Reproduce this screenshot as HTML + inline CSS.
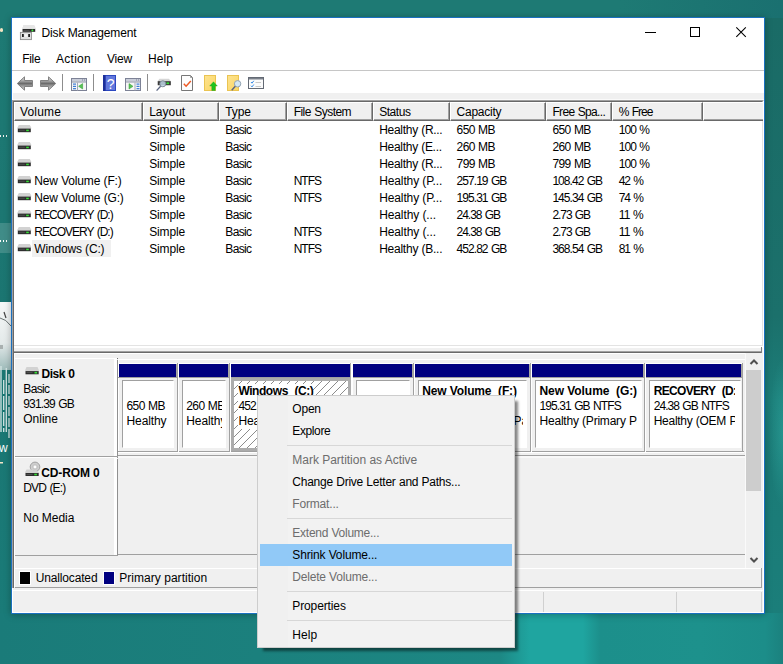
<!DOCTYPE html>
<html lang="en">
<head>
<meta charset="utf-8">
<title>Disk Management</title>
<style>
*{box-sizing:border-box;margin:0;padding:0}
html,body{width:783px;height:664px;overflow:hidden}
body{position:relative;font:12px "Liberation Sans",sans-serif;color:#000;background:#1d7974}
.a{position:absolute}
.t{position:absolute;white-space:pre;line-height:14px;height:14px;font-size:12px}
#win{left:11px;top:17px;width:754px;height:597px;border:1px solid #1a70c0;background:#fff;box-shadow:0 1px 7px 0 rgba(0,0,0,.28)}
#client{left:12px;top:93px;width:752px;height:520px;background:#f0f0f0;box-shadow:inset 0 -1px 0 #fff}
.hline{height:1px}
.vline{width:1px}
/* list header cells: classic raised */
.hc{position:absolute;top:102px;height:19px;background:#f0f0f0;border-left:1px solid #fff;border-top:1px solid #fff;border-right:1px solid #696969;border-bottom:1px solid #696969}
.hc:after{content:"";position:absolute;right:0;bottom:0;top:0;left:0;border-right:1px solid #a0a0a0;border-bottom:1px solid #a0a0a0}
.hl:after{border-right:0}
/* partitions */
.pbar{position:absolute;top:364px;height:13px;background:#000080;border-right:1px solid #a6a6a0}
.pdiv{position:absolute;top:363px;width:2px;height:89px;background:linear-gradient(90deg,#a0a0a0 50%,#fff 50%)}
.pbox{position:absolute;top:380px;height:68px;background:#fff;border-left:1px solid #a0a0a0;border-top:1px solid #a0a0a0;border-right:1px solid #fff;border-bottom:1px solid #fff}
.sep{position:absolute;left:287px;width:225px;height:1px;background:#d7d7d7}
</style>
</head>
<body>
<!-- desktop background strips -->
<div class="a" style="left:0;top:0;width:783px;height:18px;background:linear-gradient(90deg,#1e7a74 0,#1e7a74 620px,#1a7070 783px)"></div>
<div class="a" style="left:0;top:18px;width:12px;height:597px;background:linear-gradient(180deg,#1e7a74 0,#1b7571 50%,#1a7b78 100%)"></div>
<div class="a" style="left:764px;top:18px;width:19px;height:597px;background:radial-gradient(ellipse 14px 75px at 19px 415px,rgba(60,200,190,.3),rgba(60,200,190,0) 100%),linear-gradient(180deg,#1a6b66 0,#1b706b 50%,#1c7e79 64%,#1b7b77 76%,#1b7e7a 100%)"></div>
<div class="a" style="left:0;top:613px;width:783px;height:51px;background:linear-gradient(90deg,#1a7b79 0,#1b807d 258px,#1d8884 500px,#1fa5a0 530px,#1fa5a0 583px,#1c8f8b 600px,#1d918c 700px,#1c8d89 765px,#1b817e 783px)"></div>
<!-- desktop remnants on left edge -->
<div class="a" style="left:0;top:223px;width:11px;height:30px;background:rgba(255,255,255,.16)"></div>
<svg class="a" style="left:0;top:300px" width="11" height="170" viewBox="0 300 11 170">
 <defs><linearGradient id="ig" x1="0" y1="0" x2="0" y2="1"><stop offset="0" stop-color="#f6f8f8"/><stop offset=".6" stop-color="#e4eaea"/><stop offset="1" stop-color="#9fbcbb"/></linearGradient></defs>
 <rect x="0" y="302" width="11" height="68" fill="url(#ig)"/>
 <path d="M0 318q6 1 11 8" stroke="#6a7272" stroke-width="1" fill="none"/>
 <path d="M4 312l2 6" stroke="#444" stroke-width="1.200"/>
 <rect x="0" y="345" width="3" height="4" fill="#a9b0b0"/>
 <g stroke="#d6e6e5" stroke-width="1.300">
  <path d="M1 366v66"/><path d="M3.700 380v52" stroke-dasharray="14 2"/><path d="M6.300 368v64"/><path d="M9 374v66" stroke-dasharray="9 2"/>
 </g>
 <text x="-1" y="452" font-family="Liberation Sans, sans-serif" font-size="12" fill="#fff">w</text>
 <rect x="0" y="462" width="3" height="1.500" fill="#f4e6c8"/>
</svg>
<div class="a" style="left:0;top:28px;width:3px;height:4px;background:#f3e3c2;border-radius:2px"></div>
<div class="a" style="left:0;top:135px;width:7px;height:2px;background:repeating-linear-gradient(90deg,#eee 0 1px,transparent 1px 3px)"></div>
<div class="a" style="left:0;top:240px;width:7px;height:2px;background:repeating-linear-gradient(90deg,#fff 0 1px,transparent 1px 3px)"></div>
<div id="win" class="a"></div>
<div id="client" class="a"></div>

<!-- title bar icon -->
<svg class="a" style="left:19px;top:24px" width="18" height="17" viewBox="19 24 18 17">
 <path d="M23.600 25h10.400l1.800 3.800v3.200h-13.600v-3.200z" fill="#dcdcdc"/>
 <path d="M23.600 25h10.400l1.500 3.600h-13.200z" fill="#e6e6e6"/>
 <rect x="22.600" y="29" width="12.500" height="2.800" fill="#2a2a2a"/>
 <rect x="23.500" y="30" width="6" height=".8" fill="#555"/>
 <circle cx="32.400" cy="30.400" r="1" fill="#3fe63f"/>
 <rect x="20.400" y="32.400" width="11" height="7.200" fill="#e2e2e2" stroke="#8e8e8e" stroke-width=".9"/>
 <rect x="22" y="34" width="1.800" height="3" fill="#222"/><rect x="28.200" y="34" width="1.800" height="3" fill="#222"/>
 <rect x="24.500" y="34.300" width="3" height="2.400" fill="#f8f8f8"/>
</svg>
<!-- caption buttons -->
<div class="a" style="left:645px;top:32px;width:11px;height:1px;background:#000"></div>
<div class="a" style="left:690px;top:27px;width:10px;height:10px;border:1px solid #000"></div>
<svg class="a" style="left:735px;top:26px" width="13" height="13" viewBox="0 0 13 13"><path d="M1.3 1.3l9.5 9.5M10.8 1.3l-9.5 9.5" stroke="#000" stroke-width="1.1" fill="none"/></svg>

<!-- menu / toolbar lines -->
<div class="a hline" style="left:12px;top:70px;width:752px;background:#c6c6c6"></div>

<!-- toolbar icons -->
<svg class="a" style="left:12px;top:71px" width="270" height="22" viewBox="12 71 270 22">
 <defs>
  <linearGradient id="ag" x1="0" y1="0" x2="0" y2="1"><stop offset="0" stop-color="#d8d8d8"/><stop offset=".3" stop-color="#a8a8a8"/><stop offset=".5" stop-color="#6c6c6c"/><stop offset=".7" stop-color="#a0a0a0"/><stop offset="1" stop-color="#d0d0d0"/></linearGradient>
  <linearGradient id="yg" x1="0" y1="0" x2="1" y2="1"><stop offset="0" stop-color="#fde391"/><stop offset="1" stop-color="#fbd662"/></linearGradient>
 </defs>
 <!-- back / forward arrows -->
 <path d="M17.300 83.500l7.200-6.700v3.700h8v6h-8v3.700z" fill="url(#ag)" stroke="#828282" stroke-width="1"/>
 <path d="M55.700 83.500l-7.200-6.700v3.700h-8v6h8v3.700z" fill="url(#ag)" stroke="#828282" stroke-width="1"/>
 <rect x="62" y="74" width="1" height="17" fill="#8d8d8d"/>
 <!-- show/hide tree -->
 <rect x="71.500" y="78.500" width="15" height="12" fill="#f6f6f6" stroke="#7d8296"/>
 <rect x="72" y="79" width="14" height="2.500" fill="#c9cdd9"/>
 <rect x="72" y="81.500" width="14" height="1" fill="#8d93a6"/>
 <rect x="82" y="79.500" width="1" height="1" fill="#7d8296"/><rect x="84" y="79.500" width="1" height="1" fill="#7d8296"/>
 <rect x="77" y="82.500" width="1" height="8" fill="#a5aab8"/>
 <rect x="73" y="83.500" width="3" height="1.200" fill="#3a7bd5"/><rect x="73" y="85.800" width="3" height="1.200" fill="#3a7bd5"/><rect x="73" y="88.100" width="3" height="1.200" fill="#3a7bd5"/>
 <path d="M82.600 83.600v5.400l-4-2.700z" fill="#58c058" stroke="#2f9e2f" stroke-width=".5"/>
 <rect x="93" y="74" width="1" height="17" fill="#8d8d8d"/>
 <!-- help -->
 <rect x="103" y="75" width="13" height="16" fill="#2b47c0"/>
 <rect x="105.500" y="76" width="9.500" height="14" fill="#6278dc"/>
 <rect x="103" y="75" width="2.500" height="16" fill="#1d2f9a"/>
 <text x="110.600" y="89" font-family="Liberation Sans, sans-serif" font-size="14" fill="#fff" text-anchor="middle">?</text>
 <!-- action pane -->
 <rect x="125.500" y="78.500" width="15" height="12" fill="#f6f6f6" stroke="#7d8296"/>
 <rect x="126" y="79" width="14" height="2.500" fill="#c9cdd9"/>
 <rect x="126" y="81.500" width="14" height="1" fill="#8d93a6"/>
 <rect x="136" y="79.500" width="1" height="1" fill="#7d8296"/><rect x="138" y="79.500" width="1" height="1" fill="#7d8296"/>
 <rect x="134.500" y="82.500" width="1" height="8" fill="#a5aab8"/>
 <rect x="136.500" y="83.500" width="3" height="1.200" fill="#3a7bd5"/><rect x="136.500" y="85.800" width="3" height="1.200" fill="#3a7bd5"/><rect x="136.500" y="88.100" width="3" height="1.200" fill="#3a7bd5"/>
 <path d="M129 83.600v5.400l4-2.700z" fill="#58c058" stroke="#2f9e2f" stroke-width=".5"/>
 <rect x="147" y="74" width="1" height="17" fill="#8d8d8d"/>
 <!-- disk + magnifier -->
 <path d="M159.500 78.700h9.500l1.800 2.500v4h-13.300v-4z" fill="#d6d6d6"/>
 <rect x="157.800" y="81.200" width="13" height="4" fill="#3a3a3a"/>
 <rect x="166.500" y="82.400" width="2.600" height="1.700" fill="#35e035"/>
 <circle cx="162.800" cy="83.800" r="3" fill="#bfd6e6" fill-opacity=".85" stroke="#7f8d9a" stroke-width="1"/>
 <path d="M160.600 86.300l-4 4.300" stroke="#5a6480" stroke-width="1.300"/>
 <!-- doc + check -->
 <path d="M181.500 75.500h9l2 2v13h-11z" fill="#fdfdfd" stroke="#777"/>
 <path d="M190.500 75.500v2h2" fill="none" stroke="#8a8a8a" stroke-width=".8"/>
 <path d="M183.800 83.800l2.300 2.400 4.700-5.200" fill="none" stroke="#ee5a24" stroke-width="1.500"/>
 <!-- folder + up arrow -->
 <rect x="204.500" y="75.500" width="11" height="15" fill="url(#yg)" stroke="#eac452"/>
 <path d="M213.500 81.800l3.800 4.200h-2.100v4.500h-3.400v-4.500h-2.100z" fill="#1ec41e" stroke="#18a018" stroke-width=".4"/>
 <!-- folder + magnifier -->
 <rect x="227.500" y="75.500" width="11" height="15" fill="url(#yg)" stroke="#eac452"/>
 <circle cx="237.600" cy="83.800" r="3.200" fill="#d3e7f3" stroke="#93a3b2" stroke-width="1"/>
 <path d="M235.300 86.300l-3.600 4" stroke="#5a6480" stroke-width="1.400"/>
 <!-- checklist -->
 <rect x="248.500" y="77.500" width="15" height="11" fill="#fbfbfb" stroke="#646a74"/>
 <rect x="249" y="78" width="14" height="1.500" fill="#7a808a"/>
 <path d="M251 82l1 1.200 1.800-2.400M251 85.700l1 1.200 1.800-2.400" stroke="#3a8ee6" stroke-width="1" fill="none"/>
 <rect x="255.500" y="82" width="5.500" height="1" fill="#c8c8c8"/><rect x="255.500" y="86" width="5.500" height="1" fill="#c8c8c8"/>
</svg>

<div class="a vline" style="left:12px;top:588px;height:25px;background:#fff"></div>
<div class="a vline" style="left:763px;top:100px;height:513px;background:#fff"></div>
<div class="a hline" style="left:12px;top:99px;width:752px;background:#fafafa"></div>
<div class="a vline" style="left:12px;top:93px;height:7px;background:#fff"></div>
<!-- ===== upper list ===== -->
<div class="a" style="left:12px;top:100px;width:752px;height:247px;background:#fff;border:1px solid;border-color:#a0a0a0 #fff #fff #a0a0a0"></div>
<div class="a" style="left:13px;top:101px;width:750px;height:245px;background:#fff;border:1px solid;border-color:#696969 #e3e3e3 #e3e3e3 #696969"></div>
<div class="a hline" style="left:14px;top:347px;width:750px;background:#fff"></div>
<div class="hc" style="left:14px;width:129px"></div>
<div class="hc" style="left:143px;width:76px"></div>
<div class="hc" style="left:219px;width:68px"></div>
<div class="hc" style="left:287px;width:86px"></div>
<div class="hc" style="left:373px;width:77px"></div>
<div class="hc" style="left:450px;width:96px"></div>
<div class="hc" style="left:546px;width:66px"></div>
<div class="hc" style="left:612px;width:91px"></div>
<div class="hc hl" style="left:703px;width:60px;border-right:0"></div>
<!-- selected (unfocused) row label -->
<div class="a" style="left:32px;top:240px;width:79px;height:17px;background:#f0f0f0"></div>
<!-- volume icons -->
<svg class="a" style="left:17px;top:124px" width="15" height="130" viewBox="0 0 15 130">
<g transform="translate(0 0)"><path d="M1.8 1h11l1.4 2.6v1.400H.5v-1.400z" fill="#d2d2d2"/><rect x=".8" y="4.600" width="13" height="3.600" fill="#2e2e2e"/><rect x="1.800" y="5.800" width="6" height=".8" fill="#555"/><rect x="9.200" y="5.700" width="2.600" height="1.500" fill="#35e035"/></g>
<g transform="translate(0 17)"><path d="M1.8 1h11l1.4 2.6v1.400H.5v-1.400z" fill="#d2d2d2"/><rect x=".8" y="4.600" width="13" height="3.600" fill="#2e2e2e"/><rect x="1.800" y="5.800" width="6" height=".8" fill="#555"/><rect x="9.200" y="5.700" width="2.600" height="1.500" fill="#35e035"/></g>
<g transform="translate(0 34)"><path d="M1.8 1h11l1.4 2.6v1.400H.5v-1.400z" fill="#d2d2d2"/><rect x=".8" y="4.600" width="13" height="3.600" fill="#2e2e2e"/><rect x="1.800" y="5.800" width="6" height=".8" fill="#555"/><rect x="9.200" y="5.700" width="2.600" height="1.500" fill="#35e035"/></g>
<g transform="translate(0 51)"><path d="M1.8 1h11l1.4 2.6v1.400H.5v-1.400z" fill="#d2d2d2"/><rect x=".8" y="4.600" width="13" height="3.600" fill="#2e2e2e"/><rect x="1.800" y="5.800" width="6" height=".8" fill="#555"/><rect x="9.200" y="5.700" width="2.600" height="1.500" fill="#35e035"/></g>
<g transform="translate(0 68)"><path d="M1.8 1h11l1.4 2.6v1.400H.5v-1.400z" fill="#d2d2d2"/><rect x=".8" y="4.600" width="13" height="3.600" fill="#2e2e2e"/><rect x="1.800" y="5.800" width="6" height=".8" fill="#555"/><rect x="9.200" y="5.700" width="2.600" height="1.500" fill="#35e035"/></g>
<g transform="translate(0 85)"><path d="M1.8 1h11l1.4 2.6v1.400H.5v-1.400z" fill="#d2d2d2"/><rect x=".8" y="4.600" width="13" height="3.600" fill="#2e2e2e"/><rect x="1.800" y="5.800" width="6" height=".8" fill="#555"/><rect x="9.200" y="5.700" width="2.600" height="1.500" fill="#35e035"/></g>
<g transform="translate(0 102)"><path d="M1.8 1h11l1.4 2.6v1.400H.5v-1.400z" fill="#d2d2d2"/><rect x=".8" y="4.600" width="13" height="3.600" fill="#2e2e2e"/><rect x="1.800" y="5.800" width="6" height=".8" fill="#555"/><rect x="9.200" y="5.700" width="2.600" height="1.500" fill="#35e035"/></g>
<g transform="translate(0 119)"><path d="M1.8 1h11l1.4 2.6v1.400H.5v-1.400z" fill="#d2d2d2"/><rect x=".8" y="4.600" width="13" height="3.600" fill="#2e2e2e"/><rect x="1.800" y="5.800" width="6" height=".8" fill="#555"/><rect x="9.200" y="5.700" width="2.600" height="1.500" fill="#35e035"/></g>
</svg>

<!-- ===== lower pane ===== -->
<div class="a hline" style="left:12px;top:351px;width:750px;background:#a0a0a0"></div>
<div class="a hline" style="left:13px;top:352px;width:749px;background:#696969"></div>
<div class="a hline" style="left:14px;top:353px;width:748px;background:#fff"></div>
<div class="a vline" style="left:12px;top:344px;height:244px;background:#a0a0a0"></div>
<div class="a vline" style="left:13px;top:344px;height:244px;background:#696969"></div>
<div class="a vline" style="left:14px;top:353px;height:234px;background:#fff"></div>
<div class="a vline" style="left:761px;top:347px;height:6px;background:#808080"></div>
<!-- disk 0 label -->
<div class="a" style="left:15px;top:358px;width:102px;height:98px;border-top:1px solid #fff;border-right:3px solid #fff"></div>
<div class="a vline" style="left:117px;top:358px;height:1px;background:#707070"></div>
<div class="a vline" style="left:117px;top:360px;height:98px;background:#909090"></div>
<div class="a hline" style="left:118px;top:359px;width:627px;background:#fff"></div>
<div class="a hline" style="left:118px;top:363px;width:625px;background:#fff"></div>
<div class="a vline" style="left:118px;top:359px;height:92px;background:#fff"></div>
<div class="a hline" style="left:15px;top:456px;width:103px;background:#a0a0a0"></div>
<!-- cdrom label -->
<div class="a" style="left:15px;top:457px;width:102px;height:98px;border-top:1px solid #fff;border-right:3px solid #fff"></div>
<div class="a vline" style="left:117px;top:459px;height:96px;background:#909090"></div>
<div class="a hline" style="left:15px;top:555px;width:103px;background:#a0a0a0"></div>
<div class="a hline" style="left:118px;top:554px;width:627px;background:#a0a0a0"></div>
<!-- partition strip lines -->
<div class="a hline" style="left:118px;top:451px;width:626px;background:#a0a0a0"></div>
<div class="a hline" style="left:118px;top:452px;width:626px;background:#fff"></div>
<div class="a hline" style="left:118px;top:455px;width:627px;background:#a0a0a0"></div>
<div class="a hline" style="left:118px;top:456px;width:627px;height:2px;background:#f8f8f8"></div>
<!-- bars -->
<div class="a hline" style="left:118px;top:377px;width:625px;background:#a0a0a0"></div>
<div class="pbar" style="left:119px;width:58px"></div>
<div class="pbar" style="left:179px;width:50px"></div>
<div class="pbar" style="left:231px;width:120px"></div>
<div class="pbar" style="left:353px;width:60px"></div>
<div class="pbar" style="left:415px;width:115px"></div>
<div class="pbar" style="left:532px;width:112px"></div>
<div class="pbar" style="left:646px;width:96px"></div>
<div class="pdiv" style="left:177px"></div><div class="pdiv" style="left:229px"></div><div class="pdiv" style="left:413px"></div><div class="pdiv" style="left:530px"></div><div class="pdiv" style="left:644px"></div><div class="pdiv" style="left:350px;width:3px;background:linear-gradient(90deg,#a8a8a8 33.300%,#fff 33.300%)"></div><div class="pdiv" style="left:742px;width:1px;background:#a0a0a0"></div>
<div class="pbox" style="left:122px;width:52px"></div>
<div class="pbox" style="left:182px;width:44px"></div>
<div class="a" style="left:231px;top:378px;width:120px;height:73px;border:3px solid #acacac;background:#fff"></div>
<svg class="a" style="left:234px;top:381px" width="114" height="67" viewBox="0 0 114 67" shape-rendering="crispEdges">
 <defs><pattern id="hatch" width="8" height="8" patternUnits="userSpaceOnUse"><path d="M7 0h1v1h-1zM6 1h1v1h-1zM5 2h1v1h-1zM4 3h1v1h-1zM3 4h1v1h-1zM2 5h1v1h-1zM1 6h1v1h-1zM0 7h1v1h-1z" fill="#8c8c8c"/></pattern></defs>
 <rect width="114" height="67" fill="url(#hatch)"/>
</svg>
<div class="pbox" style="left:356px;width:54px"></div>
<div class="pbox" style="left:418px;width:109px"></div>
<div class="pbox" style="left:535px;width:107px"></div>
<div class="pbox" style="left:649px;width:92px"></div>
<!-- disk icons -->
<svg class="a" style="left:24px;top:366px" width="16" height="10" viewBox="0 0 16 10">
 <path d="M2.500 .9h11l1.300 3v1.400H1.200v-1.400z" fill="#d2d2d2"/><rect x="1.500" y="5.100" width="13.200" height="3.200" fill="#2e2e2e"/><rect x="2.500" y="6.200" width="6" height=".8" fill="#555"/><rect x="10.500" y="5.900" width="2.600" height="1.600" fill="#35e035"/>
</svg>
<svg class="a" style="left:24px;top:460px" width="18" height="18" viewBox="0 0 18 18">
 <circle cx="11" cy="6.900" r="4.800" fill="#cfcfcf" stroke="#a2a2a2" stroke-width="1"/><circle cx="11" cy="6.900" r="2.300" fill="#dedede" stroke="#b4b4b4" stroke-width=".6"/><circle cx="11" cy="6.900" r="1.200" fill="#fff"/>
 <path d="M2.500 9.400h6l1 1.500h4l1.300 1.300v1.200H1.200v-1.400z" fill="#d2d2d2"/><rect x="1.500" y="13" width="13.200" height="3" fill="#2e2e2e"/><rect x="2.500" y="14" width="6" height=".8" fill="#555"/><rect x="10.300" y="13.700" width="2.600" height="1.600" fill="#35e035"/>
</svg>
<!-- scrollbar -->
<div class="a" style="left:746px;top:353px;width:17px;height:215px;background:#f0f0f0"></div>
<div class="a" style="left:746px;top:370px;width:15px;height:121px;background:#cdcdcd"></div>
<div class="a vline" style="left:745px;top:353px;height:215px;background:#fafafa"></div>
<svg class="a" style="left:747px;top:354px" width="15" height="214" viewBox="0 0 15 214"><path d="M3.500 10l3.500-3.500 3.500 3.500M3.500 204l3.500 3.500 3.500-3.500" fill="none" stroke="#505050" stroke-width="2"/></svg>
<!-- legend -->
<div class="a hline" style="left:15px;top:568px;width:747px;background:#fff"></div>
<div class="a hline" style="left:15px;top:587px;width:747px;background:#a0a0a0"></div>
<div class="a vline" style="left:761px;top:568px;height:20px;background:#a0a0a0"></div>
<div class="a" style="left:19px;top:571px;width:12px;height:14px;background:#000;border:1px solid #fff"></div>
<div class="a" style="left:103px;top:571px;width:12px;height:14px;background:#000080;border:1px solid #fff"></div>
<!-- status bar -->
<div class="a hline" style="left:12px;top:590px;width:752px;background:#fff"></div>
<div class="a vline" style="left:543px;top:592px;height:20px;background:#d0d0d0"></div>
<div class="a vline" style="left:676px;top:592px;height:20px;background:#d0d0d0"></div>
<div class="a vline" style="left:761px;top:592px;height:20px;background:#d0d0d0"></div>

<span class="t" style="left:41.5px;top:26.0px;word-spacing:0.12px;letter-spacing:-0.12px;">Disk Management</span>
<span class="t" style="left:22.3px;top:52.0px;letter-spacing:-0.34px;">File</span>
<span class="t" style="left:56.0px;top:52.0px;letter-spacing:0.27px;">Action</span>
<span class="t" style="left:107.0px;top:52.0px;letter-spacing:-0.20px;">View</span>
<span class="t" style="left:148.0px;top:52.0px;letter-spacing:0.08px;">Help</span>
<span class="t" style="left:20.0px;top:105.0px;letter-spacing:0.16px;">Volume</span>
<span class="t" style="left:149.2px;top:105.0px;letter-spacing:-0.01px;">Layout</span>
<span class="t" style="left:225.3px;top:105.0px;letter-spacing:-0.13px;">Type</span>
<span class="t" style="left:293.7px;top:105.0px;word-spacing:0.53px;letter-spacing:-0.53px;">File System</span>
<span class="t" style="left:379.2px;top:105.0px;letter-spacing:-0.46px;">Status</span>
<span class="t" style="left:456.6px;top:105.0px;letter-spacing:-0.25px;">Capacity</span>
<span class="t" style="left:552.4px;top:105.0px;word-spacing:0.67px;letter-spacing:-0.67px;">Free Spa...</span>
<span class="t" style="left:618.8px;top:105.0px;word-spacing:1.04px;letter-spacing:-1.04px;">% Free</span>
<span class="t" style="left:149.2px;top:123.0px;letter-spacing:-0.15px;">Simple</span>
<span class="t" style="left:225.3px;top:123.0px;letter-spacing:-0.63px;">Basic</span>
<span class="t" style="left:379.2px;top:123.0px;word-spacing:0.29px;letter-spacing:-0.29px;">Healthy (R...</span>
<span class="t" style="left:456.6px;top:123.0px;word-spacing:0.61px;letter-spacing:-0.61px;">650 MB</span>
<span class="t" style="left:552.4px;top:123.0px;word-spacing:0.61px;letter-spacing:-0.61px;">650 MB</span>
<span class="t" style="left:618.8px;top:123.0px;word-spacing:0.93px;letter-spacing:-0.93px;">100 %</span>
<span class="t" style="left:149.2px;top:140.0px;letter-spacing:-0.15px;">Simple</span>
<span class="t" style="left:225.3px;top:140.0px;letter-spacing:-0.63px;">Basic</span>
<span class="t" style="left:379.2px;top:140.0px;word-spacing:0.29px;letter-spacing:-0.29px;">Healthy (E...</span>
<span class="t" style="left:456.6px;top:140.0px;word-spacing:0.61px;letter-spacing:-0.61px;">260 MB</span>
<span class="t" style="left:552.4px;top:140.0px;word-spacing:0.61px;letter-spacing:-0.61px;">260 MB</span>
<span class="t" style="left:618.8px;top:140.0px;word-spacing:0.93px;letter-spacing:-0.93px;">100 %</span>
<span class="t" style="left:149.2px;top:157.0px;letter-spacing:-0.15px;">Simple</span>
<span class="t" style="left:225.3px;top:157.0px;letter-spacing:-0.63px;">Basic</span>
<span class="t" style="left:379.2px;top:157.0px;word-spacing:0.29px;letter-spacing:-0.29px;">Healthy (R...</span>
<span class="t" style="left:456.6px;top:157.0px;word-spacing:0.61px;letter-spacing:-0.61px;">799 MB</span>
<span class="t" style="left:552.4px;top:157.0px;word-spacing:0.61px;letter-spacing:-0.61px;">799 MB</span>
<span class="t" style="left:618.8px;top:157.0px;word-spacing:0.93px;letter-spacing:-0.93px;">100 %</span>
<span class="t" style="left:34.3px;top:174.0px;word-spacing:0.16px;letter-spacing:-0.16px;">New Volume (F:)</span>
<span class="t" style="left:149.2px;top:174.0px;letter-spacing:-0.15px;">Simple</span>
<span class="t" style="left:225.3px;top:174.0px;letter-spacing:-0.63px;">Basic</span>
<span class="t" style="left:293.7px;top:174.0px;letter-spacing:-0.99px;">NTFS</span>
<span class="t" style="left:379.2px;top:174.0px;word-spacing:0.12px;letter-spacing:-0.12px;">Healthy (P...</span>
<span class="t" style="left:456.6px;top:174.0px;word-spacing:0.95px;letter-spacing:-0.95px;">257.19 GB</span>
<span class="t" style="left:552.4px;top:174.0px;word-spacing:0.95px;letter-spacing:-0.95px;">108.42 GB</span>
<span class="t" style="left:618.8px;top:174.0px;word-spacing:1.12px;letter-spacing:-1.12px;">42 %</span>
<span class="t" style="left:34.3px;top:191.0px;word-spacing:0.15px;letter-spacing:-0.15px;">New Volume (G:)</span>
<span class="t" style="left:149.2px;top:191.0px;letter-spacing:-0.15px;">Simple</span>
<span class="t" style="left:225.3px;top:191.0px;letter-spacing:-0.63px;">Basic</span>
<span class="t" style="left:293.7px;top:191.0px;letter-spacing:-0.99px;">NTFS</span>
<span class="t" style="left:379.2px;top:191.0px;word-spacing:0.12px;letter-spacing:-0.12px;">Healthy (P...</span>
<span class="t" style="left:456.6px;top:191.0px;word-spacing:0.95px;letter-spacing:-0.95px;">195.31 GB</span>
<span class="t" style="left:552.4px;top:191.0px;word-spacing:0.95px;letter-spacing:-0.95px;">145.34 GB</span>
<span class="t" style="left:618.8px;top:191.0px;word-spacing:1.12px;letter-spacing:-1.12px;">74 %</span>
<span class="t" style="left:34.3px;top:208.0px;word-spacing:0.99px;letter-spacing:-0.99px;">RECOVERY (D:)</span>
<span class="t" style="left:149.2px;top:208.0px;letter-spacing:-0.15px;">Simple</span>
<span class="t" style="left:225.3px;top:208.0px;letter-spacing:-0.63px;">Basic</span>
<span class="t" style="left:379.2px;top:208.0px;word-spacing:0.11px;letter-spacing:-0.11px;">Healthy (...</span>
<span class="t" style="left:456.6px;top:208.0px;word-spacing:1.04px;letter-spacing:-1.04px;">24.38 GB</span>
<span class="t" style="left:552.4px;top:208.0px;word-spacing:1.06px;letter-spacing:-1.06px;">2.73 GB</span>
<span class="t" style="left:618.8px;top:208.0px;word-spacing:0.82px;letter-spacing:-0.82px;">11 %</span>
<span class="t" style="left:34.3px;top:225.0px;word-spacing:0.99px;letter-spacing:-0.99px;">RECOVERY (D:)</span>
<span class="t" style="left:149.2px;top:225.0px;letter-spacing:-0.15px;">Simple</span>
<span class="t" style="left:225.3px;top:225.0px;letter-spacing:-0.63px;">Basic</span>
<span class="t" style="left:293.7px;top:225.0px;letter-spacing:-0.99px;">NTFS</span>
<span class="t" style="left:379.2px;top:225.0px;word-spacing:0.11px;letter-spacing:-0.11px;">Healthy (...</span>
<span class="t" style="left:456.6px;top:225.0px;word-spacing:1.04px;letter-spacing:-1.04px;">24.38 GB</span>
<span class="t" style="left:552.4px;top:225.0px;word-spacing:1.06px;letter-spacing:-1.06px;">2.73 GB</span>
<span class="t" style="left:618.8px;top:225.0px;word-spacing:0.82px;letter-spacing:-0.82px;">11 %</span>
<span class="t" style="left:34.3px;top:242.0px;word-spacing:0.17px;letter-spacing:-0.17px;">Windows (C:)</span>
<span class="t" style="left:149.2px;top:242.0px;letter-spacing:-0.15px;">Simple</span>
<span class="t" style="left:225.3px;top:242.0px;letter-spacing:-0.63px;">Basic</span>
<span class="t" style="left:293.7px;top:242.0px;letter-spacing:-0.99px;">NTFS</span>
<span class="t" style="left:379.2px;top:242.0px;word-spacing:0.25px;letter-spacing:-0.25px;">Healthy (B...</span>
<span class="t" style="left:456.6px;top:242.0px;word-spacing:0.95px;letter-spacing:-0.95px;">452.82 GB</span>
<span class="t" style="left:552.4px;top:242.0px;word-spacing:0.95px;letter-spacing:-0.95px;">368.54 GB</span>
<span class="t" style="left:618.8px;top:242.0px;word-spacing:1.12px;letter-spacing:-1.12px;">81 %</span>
<span class="t" style="left:41.5px;top:367.0px;word-spacing:0.47px;letter-spacing:-0.47px;font-weight:bold;">Disk 0</span>
<span class="t" style="left:23.3px;top:382.0px;letter-spacing:-0.63px;">Basic</span>
<span class="t" style="left:23.3px;top:397.0px;word-spacing:0.86px;letter-spacing:-0.86px;">931.39 GB</span>
<span class="t" style="left:23.3px;top:412.0px;letter-spacing:-0.03px;">Online</span>
<span class="t" style="left:41.3px;top:466.0px;word-spacing:0.15px;letter-spacing:-0.15px;font-weight:bold;">CD-ROM 0</span>
<span class="t" style="left:23.3px;top:481.0px;word-spacing:0.86px;letter-spacing:-0.86px;">DVD (E:)</span>
<span class="t" style="left:23.3px;top:511.0px;word-spacing:0.05px;letter-spacing:-0.05px;">No Media</span>
<span class="t" style="left:126.5px;top:399.0px;word-spacing:0.61px;letter-spacing:-0.61px;">650 MB</span>
<span class="t" style="left:126.5px;top:414.0px;letter-spacing:-0.10px;width:46px;overflow:hidden;">Healthy</span>
<span class="t" style="left:186.3px;top:399.0px;word-spacing:0.61px;letter-spacing:-0.61px;width:35.5px;overflow:hidden;">260 MB</span>
<span class="t" style="left:186.3px;top:414.0px;letter-spacing:-0.10px;width:35.5px;overflow:hidden;">Healthy</span>
<span class="t" style="left:238.4px;top:384.0px;word-spacing:0.44px;letter-spacing:-0.44px;font-weight:bold;background:#fff;height:15px;">Windows  (C:)</span>
<span class="t" style="left:238.4px;top:399.0px;word-spacing:0.84px;letter-spacing:-0.84px;background:#fff;height:15px;">452.82 GB NTFS</span>
<span class="t" style="left:238.4px;top:414.0px;word-spacing:0.15px;letter-spacing:-0.15px;width:109.6px;overflow:hidden;background:#fff;height:15px;">Healthy (Boot, Page File,</span>
<span class="t" style="left:422.2px;top:384.0px;word-spacing:0.14px;letter-spacing:-0.14px;font-weight:bold;">New Volume  (F:)</span>
<span class="t" style="left:422.2px;top:399.0px;word-spacing:0.88px;letter-spacing:-0.88px;">257.19 GB NTFS</span>
<span class="t" style="left:422.2px;top:414.0px;word-spacing:0.09px;letter-spacing:-0.09px;width:101.1px;overflow:hidden;">Healthy (Primary Partition)</span>
<span class="t" style="left:539.5px;top:384.0px;word-spacing:0.07px;letter-spacing:-0.07px;font-weight:bold;">New Volume  (G:)</span>
<span class="t" style="left:539.5px;top:399.0px;word-spacing:0.90px;letter-spacing:-0.90px;">195.31 GB NTFS</span>
<span class="t" style="left:539.5px;top:414.0px;word-spacing:0.21px;letter-spacing:-0.21px;width:97.4px;overflow:hidden;">Healthy (Primary Partition)</span>
<span class="t" style="left:653.7px;top:384.0px;word-spacing:0.67px;letter-spacing:-0.67px;font-weight:bold;width:81.2px;overflow:hidden;">RECOVERY  (D:)</span>
<span class="t" style="left:653.7px;top:399.0px;word-spacing:0.94px;letter-spacing:-0.94px;">24.38 GB NTFS</span>
<span class="t" style="left:653.7px;top:414.0px;word-spacing:0.27px;letter-spacing:-0.27px;width:81.2px;overflow:hidden;">Healthy (OEM Partition)</span>
<span class="t" style="left:35.7px;top:571.0px;letter-spacing:-0.15px;">Unallocated</span>
<span class="t" style="left:119.2px;top:571.0px;letter-spacing:0.04px;">Primary partition</span>

<!-- ===== context menu ===== -->
<div class="a" style="left:257px;top:395px;width:258px;height:253px;background:#f2f2f2;border:1px solid #cdcdcd;box-shadow:4px 4.500px 2.500px -1.500px rgba(0,0,0,.48)"></div>
<div class="a" style="left:258px;top:396px;width:30px;height:251px;background:#f0f0f0"></div>
<div class="a" style="left:260px;top:544px;width:252px;height:22px;background:#91c9f7"></div>
<div class="sep" style="top:445px"></div>
<div class="sep" style="top:518px"></div>
<div class="sep" style="top:591px"></div>
<div class="sep" style="top:620px"></div>
<span class="t" style="left:292.3px;top:402.0px;letter-spacing:-0.21px;">Open</span>
<span class="t" style="left:292.3px;top:424.0px;letter-spacing:-0.38px;">Explore</span>
<span class="t" style="left:292.3px;top:453.0px;word-spacing:0.02px;letter-spacing:-0.02px;color:#6d6d6d;">Mark Partition as Active</span>
<span class="t" style="left:292.3px;top:475.0px;word-spacing:0.24px;letter-spacing:-0.24px;">Change Drive Letter and Paths...</span>
<span class="t" style="left:292.3px;top:497.0px;letter-spacing:-0.17px;color:#6d6d6d;">Format...</span>
<span class="t" style="left:292.3px;top:526.0px;word-spacing:0.25px;letter-spacing:-0.25px;color:#6d6d6d;">Extend Volume...</span>
<span class="t" style="left:292.3px;top:548.0px;word-spacing:0.16px;letter-spacing:-0.16px;">Shrink Volume...</span>
<span class="t" style="left:292.3px;top:570.0px;word-spacing:0.20px;letter-spacing:-0.20px;color:#6d6d6d;">Delete Volume...</span>
<span class="t" style="left:292.3px;top:599.0px;letter-spacing:-0.12px;">Properties</span>
<span class="t" style="left:292.3px;top:628.0px;letter-spacing:0.08px;">Help</span>
</body>
</html>
